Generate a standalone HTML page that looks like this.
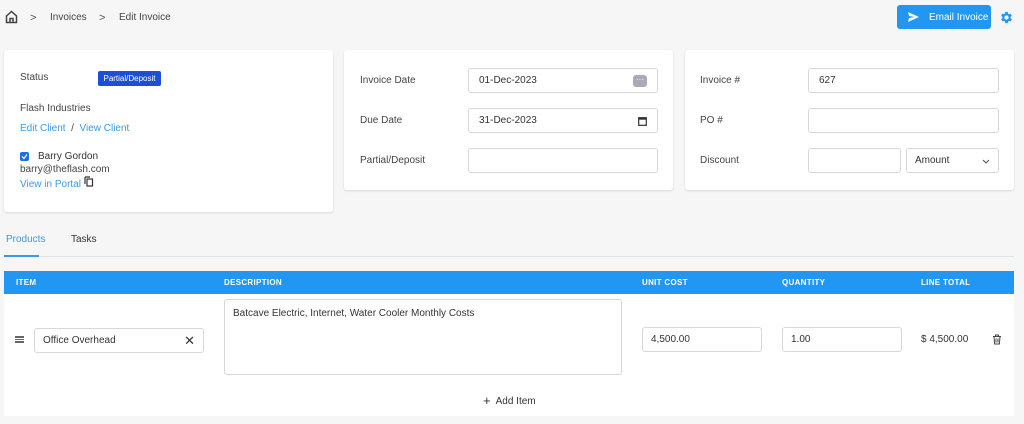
<!DOCTYPE html>
<html><head><style>
*{box-sizing:border-box;margin:0;padding:0}
body{width:1024px;height:424px;background:#f6f6f6;font-family:"Liberation Sans",sans-serif;font-size:10px;color:#333;position:relative;overflow:hidden}
.a{position:absolute}
.card{position:absolute;background:#fff;border-radius:3px;box-shadow:0 1px 2px rgba(0,0,0,.12)}
.inp{position:absolute;background:#fff;border:1px solid #d8d8d8;border-radius:3px;font-size:10px;color:#333;padding-left:10px;display:flex;align-items:center}
.lbl{position:absolute;font-size:10px;color:#444}
.blue{color:#3a99e8}
.th{position:absolute;top:278px;font-size:8px;font-weight:bold;color:#fff;letter-spacing:.3px}
</style></head><body>
<svg class="a" style="left:5px;top:10px" width="13" height="14" viewBox="0 0 13 14"><path d="M1.5 6 L6.5 1.5 L11.5 6 V12.5 H1.5 Z M5 12.5 V8.5 H8 V12.5" fill="none" stroke="#444" stroke-width="1.5"/></svg>
<div class="a" style="left:30px;top:12px;font-size:11px;color:#555">&gt;</div>
<div class="a" style="left:50px;top:12px;font-size:10px;color:#444">Invoices</div>
<div class="a" style="left:99px;top:12px;font-size:11px;color:#555">&gt;</div>
<div class="a" style="left:119px;top:12px;font-size:10px;color:#444">Edit Invoice</div>
<div class="a" style="left:897px;top:5px;width:94px;height:24px;background:#2196f3;border-radius:3px;color:#fff;font-size:10px;display:flex;align-items:center;padding-left:11px">
<svg width="11" height="10" viewBox="0 0 11 10"><path d="M0 0 L11 5 L0 10 L1 6 L7 5 L1 4 Z" fill="#fff"/></svg><span style="margin-left:10px">Email Invoice</span></div>
<svg class="a" style="left:999px;top:10px" width="15" height="15" viewBox="0 0 24 24"><path fill="#2196f3" d="M19.4 13a7.5 7.5 0 0 0 0-2l2.1-1.6-2-3.5-2.5 1a7.5 7.5 0 0 0-1.7-1L15 3h-4l-.4 2.7a7.5 7.5 0 0 0-1.7 1l-2.5-1-2 3.5L6.6 11a7.5 7.5 0 0 0 0 2l-2.1 1.6 2 3.5 2.5-1a7.5 7.5 0 0 0 1.7 1L11 21h4l.4-2.7a7.5 7.5 0 0 0 1.7-1l2.5 1 2-3.5zM13 15.5a3.5 3.5 0 1 1 0-7 3.5 3.5 0 0 1 0 7z" transform="translate(-1 0)"/></svg>

<div class="card" style="left:4px;top:50px;width:329px;height:162px"></div>
<div class="lbl" style="left:20px;top:72px">Status</div>
<div class="a" style="left:98px;top:71px;width:63px;height:15px;background:#1d4ed8;border-radius:2px;color:#fff;font-size:8px;text-align:center;line-height:15px">Partial/Deposit</div>
<div class="lbl" style="left:20px;top:103px">Flash Industries</div>
<div class="a blue" style="left:20px;top:123px;font-size:10px">Edit Client <span style="color:#444">&nbsp;/&nbsp;</span> View Client</div>
<div class="a" style="left:20px;top:152px;width:9px;height:9px;background:#1d6fe0;border-radius:2px"><svg width="9" height="9"><path d="M2 4.5 L4 6.5 L7 2.5" stroke="#fff" fill="none" stroke-width="1.2"/></svg></div>
<div class="lbl" style="left:38px;top:151px;color:#333">Barry Gordon</div>
<div class="lbl" style="left:20px;top:164px;color:#444">barry@theflash.com</div>
<div class="a blue" style="left:20px;top:179px;font-size:10px">View in Portal</div>
<svg class="a" style="left:84px;top:176px" width="10" height="11" viewBox="0 0 10 11"><path d="M1 1 H6 M1 1 V8" stroke="#333" fill="none" stroke-width="1.2"/><rect x="3" y="3" width="5.5" height="7" stroke="#333" fill="none" stroke-width="1.2"/></svg>

<div class="card" style="left:344px;top:50px;width:329px;height:140px"></div>
<div class="lbl" style="left:360px;top:75px">Invoice Date</div>
<div class="inp" style="left:468px;top:68px;width:190px;height:25px">01-Dec-2023<span style="position:absolute;right:10px;top:6px;width:14px;height:12px;background:#aab;border-radius:3px;color:#fff;font-size:8px;line-height:10px;text-align:center">···</span></div>
<div class="lbl" style="left:360px;top:115px">Due Date</div>
<div class="inp" style="left:468px;top:108px;width:190px;height:25px">31-Dec-2023<svg style="position:absolute;right:10px;top:7px" width="9" height="10"><rect x="0.7" y="1.7" width="7.6" height="7.6" fill="none" stroke="#333" stroke-width="1.2"/><rect x="0.7" y="1.7" width="7.6" height="2" fill="#333"/></svg></div>
<div class="lbl" style="left:360px;top:155px">Partial/Deposit</div>
<div class="inp" style="left:468px;top:148px;width:190px;height:25px"></div>

<div class="card" style="left:685px;top:50px;width:329px;height:140px"></div>
<div class="lbl" style="left:700px;top:75px">Invoice #</div>
<div class="inp" style="left:808px;top:68px;width:191px;height:25px">627</div>
<div class="lbl" style="left:700px;top:115px">PO #</div>
<div class="inp" style="left:808px;top:108px;width:191px;height:25px"></div>
<div class="lbl" style="left:700px;top:155px">Discount</div>
<div class="inp" style="left:808px;top:148px;width:93px;height:25px"></div>
<div class="inp" style="left:906px;top:148px;width:93px;height:25px;padding-left:8px">Amount<svg style="position:absolute;right:8px;top:10px" width="8" height="5"><path d="M1 1 L4 4 L7 1" stroke="#555" fill="none"/></svg></div>

<div class="a blue" style="left:6px;top:234px;font-size:10px">Products</div>
<div class="a" style="left:71px;top:234px;font-size:10px;color:#333">Tasks</div>
<div class="a" style="left:4px;top:256px;width:1010px;height:1px;background:#e2e2e2"></div>
<div class="a" style="left:4px;top:255px;width:35px;height:2px;background:#3a99e8"></div>

<div class="a" style="left:4px;top:271px;width:1010px;height:145px;background:#fff"></div>
<div class="a" style="left:4px;top:271px;width:1010px;height:23px;background:#2196f3"></div>
<div class="th" style="left:16px">ITEM</div>
<div class="th" style="left:224px">DESCRIPTION</div>
<div class="th" style="left:642px">UNIT COST</div>
<div class="th" style="left:782px">QUANTITY</div>
<div class="th" style="left:921px">LINE TOTAL</div>
<div class="a" style="left:15px;top:336px;width:9px;height:7px;border-top:2px solid #666;border-bottom:2px solid #666"><div style="margin-top:0.5px;height:1.5px;background:#666"></div></div>
<div class="inp" style="left:34px;top:328px;width:170px;height:25px;padding-left:8px">Office Overhead<span style="position:absolute;right:8px;top:4px;font-size:13px;color:#333">✕</span></div>
<div class="inp" style="left:224px;top:299px;width:398px;height:76px;align-items:flex-start;padding-top:8px;padding-left:8px">Batcave Electric, Internet, Water Cooler Monthly Costs</div>
<div class="inp" style="left:642px;top:327px;width:120px;height:25px;padding-left:8px">4,500.00</div>
<div class="inp" style="left:782px;top:327px;width:120px;height:25px;padding-left:8px">1.00</div>
<div class="a" style="left:921px;top:334px;font-size:10px;color:#333">$ 4,500.00</div>
<svg class="a" style="left:992px;top:334px" width="10" height="11" viewBox="0 0 10 11"><path d="M1 2.5 H9 M3.5 2.5 V1 H6.5 V2.5 M2 2.5 L2.6 10 H7.4 L8 2.5 M4 4.5 V8.5 M6 4.5 V8.5" stroke="#444" fill="none" stroke-width="1"/></svg>
<div class="a" style="left:483px;top:393px;font-size:10px;color:#333"><span style="font-size:13px;vertical-align:-1px">+</span>&nbsp; Add Item</div>
</body></html>
